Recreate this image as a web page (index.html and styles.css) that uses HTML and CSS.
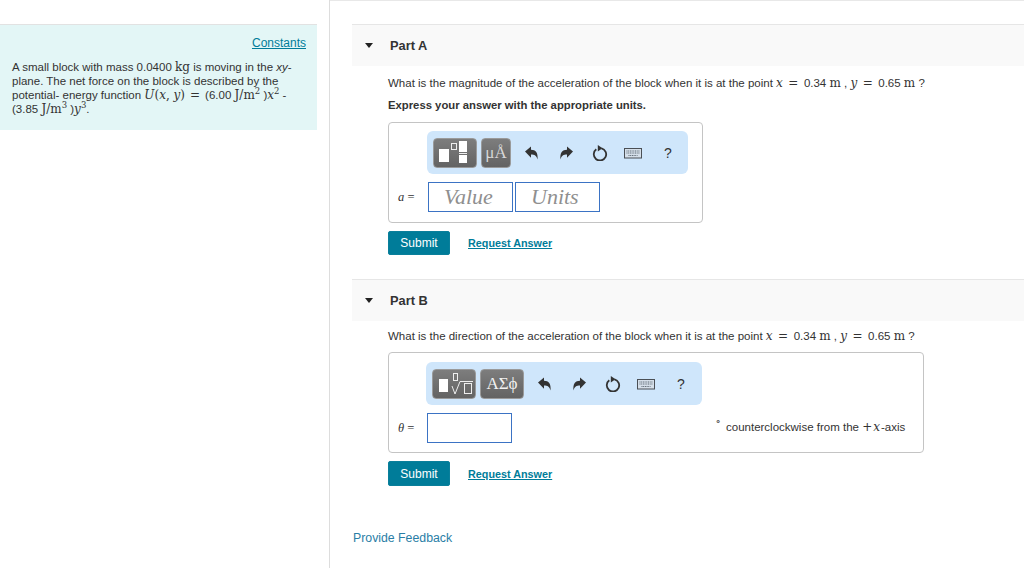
FILE: index.html
```html
<!DOCTYPE html>
<html lang="en">
<head>
<meta charset="utf-8">
<title>Part A and Part B</title>
<link rel="stylesheet" href="styles.css">
</head>
<body>
<div class="page">
  <aside class="left">
    <div class="intro">
      <div class="constants"><a href="#">Constants</a></div>
      <p class="intro-text">A small block with mass 0.0400 <span class="m">kg</span> is moving in the <i>xy</i>-<br>plane. The net force on the block is described by the<br>potential- energy function <span class="m"><i>U</i>(<i>x</i>, <i>y</i>)<span class="eq">=</span></span>(6.00 <span class="m">J/m<sup>2</sup></span> )<span class="m"><i>x</i><sup>2</sup></span> -<br>(3.85 <span class="m">J/m<sup>3</sup></span> )<span class="m"><i>y</i><sup>3</sup></span>.</p>
    </div>
  </aside>
  <main class="right">
    <section class="part">
      <header class="part-head"><span class="caret"></span><h2>Part A</h2></header>
      <div class="part-body">
        <p class="question">What is the magnitude of the acceleration of the block when it is at the point <span class="m"><i>x</i><span class="eq">=</span></span>0.34 <span class="m">m</span> , <span class="m"><i>y</i><span class="eq">=</span></span>0.65 <span class="m">m</span> ?</p>
        <p class="instruct">Express your answer with the appropriate units.</p>
        <div class="answer answer-a">
          <div class="toolbar toolbar-a">
            <button class="tool tool-wide" aria-label="Templates">
              <svg width="42" height="28" viewBox="0 0 42 28"><rect x="5" y="10" width="10" height="13" fill="#fff"/><rect x="17.500" y="4.500" width="5" height="6" fill="none" stroke="#eee"/><rect x="25" y="2" width="8" height="11" fill="#fff"/><rect x="25" y="14" width="8" height="1" fill="#eee"/><rect x="25" y="16" width="8" height="8" fill="#fff"/></svg>
            </button>
            <button class="tool tool-units">μÅ</button>
            <span class="icons">
              <svg class="ic" width="16" height="16" viewBox="0 0 16 16"><path d="M1 6.500 7 1.500v3.200c4.800 0 7 2.800 6.600 9.800-1.200-3.800-3-5-6.600-5v3.200z" fill="#333"/></svg>
              <svg class="ic" width="16" height="16" viewBox="0 0 16 16"><path d="M15 6.500 9 1.500v3.200c-4.800 0-7 2.800-6.600 9.800 1.200-3.800 3-5 6.600-5v3.200z" fill="#333"/></svg>
              <svg class="ic" width="16" height="16" viewBox="0 0 16 16"><path d="M9.500 3.300A6.200 6.200 0 1 1 4.300 4.300" fill="none" stroke="#333" stroke-width="1.800"/><path d="M5.800 0 10.500 3.200 5.800 6.500z" fill="#333"/></svg>
              <svg class="ic ic-kb" width="18" height="12" viewBox="0 0 18 12"><rect x=".500" y="1.500" width="17" height="9.500" fill="#d5dfe9" stroke="#4a4f55"/><path d="M2.500 4h13M2.500 6h13M4.500 8.500h9" stroke="#5b6670" stroke-width="1" stroke-dasharray="1 .7"/></svg>
              <span class="help">?</span>
            </span>
          </div>
          <div class="entry">
            <span class="label"><i>a</i> =</span>
            <span class="field field-ph">Value</span>
            <span class="field field-ph">Units</span>
          </div>
        </div>
        <div class="actions"><button class="submit">Submit</button><a class="req" href="#">Request Answer</a></div>
      </div>
    </section>
    <section class="part part-b">
      <header class="part-head"><span class="caret"></span><h2>Part B</h2></header>
      <div class="part-body">
        <p class="question">What is the direction of the acceleration of the block when it is at the point <span class="m"><i>x</i><span class="eq">=</span></span>0.34 <span class="m">m</span> , <span class="m"><i>y</i><span class="eq">=</span></span>0.65 <span class="m">m</span> ?</p>
        <div class="answer answer-b">
          <div class="toolbar toolbar-b">
            <button class="tool tool-wide" aria-label="Templates">
              <svg width="42" height="28" viewBox="0 0 42 28"><rect x="6" y="9" width="9" height="13" fill="#fff"/><rect x="20.500" y="3.500" width="4" height="7" fill="none" stroke="#eee"/><path d="M19 16l3 8L27 11.500h13" fill="none" stroke="#eee"/><rect x="31.500" y="13.500" width="7" height="10" fill="none" stroke="#eee"/></svg>
            </button>
            <button class="tool tool-greek">ΑΣϕ</button>
            <span class="icons">
              <svg class="ic" width="16" height="16" viewBox="0 0 16 16"><path d="M1 6.500 7 1.500v3.200c4.800 0 7 2.800 6.600 9.800-1.200-3.800-3-5-6.600-5v3.200z" fill="#333"/></svg>
              <svg class="ic" width="16" height="16" viewBox="0 0 16 16"><path d="M15 6.500 9 1.500v3.200c-4.800 0-7 2.800-6.600 9.800 1.200-3.800 3-5 6.600-5v3.200z" fill="#333"/></svg>
              <svg class="ic" width="16" height="16" viewBox="0 0 16 16"><path d="M9.500 3.300A6.200 6.200 0 1 1 4.300 4.300" fill="none" stroke="#333" stroke-width="1.800"/><path d="M5.800 0 10.500 3.200 5.800 6.500z" fill="#333"/></svg>
              <svg class="ic ic-kb" width="18" height="12" viewBox="0 0 18 12"><rect x=".500" y="1.500" width="17" height="9.500" fill="#d5dfe9" stroke="#4a4f55"/><path d="M2.500 4h13M2.500 6h13M4.500 8.500h9" stroke="#5b6670" stroke-width="1" stroke-dasharray="1 .7"/></svg>
              <span class="help">?</span>
            </span>
          </div>
          <div class="entry entry-b">
            <span class="label"><i>θ</i> =</span>
            <span class="field field-theta"></span>
            <span class="unit-note"><sup>∘</sup><span class="note">counterclockwise from the <span class="m">+<i>x</i></span>-axis</span></span>
          </div>
        </div>
        <div class="actions actions-b"><button class="submit">Submit</button><a class="req" href="#">Request Answer</a></div>
      </div>
    </section>
    <a class="feedback" href="#">Provide Feedback</a>
  </main>
</div>
</body>
</html>
```
FILE: styles.css
```css
* { box-sizing: border-box; }
html, body { margin: 0; height: 568px; overflow: hidden; background: #fff; }
body { font-family: "Liberation Sans", Arial, sans-serif; font-size: 11.500px; color: #333; }
p, h2 { margin: 0; }
a { color: #007c99; }
button { font-family: inherit; padding: 0; margin: 0; }

.page { display: flex; height: 568px; }
.left { width: 330px; flex: none; border-right: 1px solid #ddd; padding-top: 24px; }
.right { flex: 1; padding: 23px 0 0 22px; border-top: 1px solid #e8e8e8; min-width: 0; }

.intro { width: 317px; height: 106px; background: #e3f6f6; border-top: 1px solid #e2e2e2; padding: 11px 11px 0 12px; }
.constants { text-align: right; line-height: 14px; font-size: 12px; }
.intro-text { margin-top: 9.500px; line-height: 14.300px; color: #333; white-space: nowrap; }

.m { font-family: "DejaVu Serif", "Liberation Serif", serif; font-size: 12px; line-height: 1; color: #333; }
.eq { margin: 0 5px; }
.question .eq { margin: 0 5.500px; }
sup { font-size: 8.500px; line-height: 0; }

.part-head { height: 42px; background: #f9f9f9; border-top: 1px solid #e6e6e6; display: flex; align-items: center; padding-left: 13px; }
.caret { width: 0; height: 0; border-left: 4.500px solid transparent; border-right: 4.500px solid transparent; border-top: 5px solid #222; margin-right: 16px; }
.part-head h2 { font-size: 12.800px; font-weight: bold; color: #333; margin-left: 1px; }
.part-body { padding-left: 36px; }
.question { padding-top: 9px; line-height: 16px; white-space: nowrap; }
.part-b .question { padding-top: 7px; }
.instruct { margin-top: 7px; line-height: 14px; font-weight: bold; font-size: 11.300px; }

.answer { border: 1px solid #c4c4c4; border-radius: 4px; background: #fff; margin-top: 10px; padding-left: 39px; }
.answer-a { width: 315px; height: 101px; padding-top: 8px; }
.answer-b { width: 536px; height: 101px; padding-top: 9px; margin-top: 8px; }

.toolbar { height: 43px; background: #cfe6fb; border-radius: 6px; display: flex; align-items: center; padding-left: 6px; }
.toolbar-a { width: 261px; margin-left: -1px; }
.toolbar-b { width: 276px; margin-left: -2px; }
.tool { height: 30px; border: 1px solid #9a9a9a; border-radius: 4px; background: linear-gradient(#7d7d7d, #636363); color: #f2f2f2; font-family: "Liberation Serif", serif; display: flex; align-items: center; justify-content: center; }
.tool-wide { width: 44px; margin-right: 4px; overflow: hidden; }
.tool-units { width: 30px; font-size: 17px; color: #d8d8d8; }
.tool-greek { width: 44px; font-size: 17px; }
.icons { display: flex; align-items: center; margin-left: 13px; gap: 18px; }
.ic { display: block; flex: none; }
.ic-kb { margin-left: -2px; }
.help { font-size: 14px; color: #333; margin-left: 4px; }

.entry { display: flex; align-items: center; margin-top: 8px; height: 30px; margin-left: -30px; }
.label { width: 30px; font-family: "Liberation Serif", serif; font-size: 12.500px; color: #333; flex: none; }
.entry-b .label { width: 29px; }
.field { height: 30px; width: 85px; border: 1px solid #3b73c4; background: #fff; flex: none; }
.field + .field { margin-left: 2px; }
.field-ph { font-family: "Liberation Serif", serif; font-style: italic; font-size: 22px; color: #8f8f8f; padding-left: 15px; line-height: 28px; }
.unit-note { margin-left: 203px; display: flex; white-space: nowrap; }
.unit-note sup { font-size: 10px; line-height: 12px; margin-top: -6px; color: #555; }
.note { margin-left: 5px; padding-bottom: 2px; }
.note .m { letter-spacing: 1px; }

.actions { display: flex; align-items: center; margin-top: 8px; height: 24px; }
.actions-b { height: 25px; }
.submit { width: 62px; height: 100%; background: #007c99; color: #fff; border: 1px solid #0a7f9b; border-radius: 2px; font-size: 12px; }
.req { margin-left: 18px; font-weight: bold; font-size: 10.800px; }

.part-b { margin-top: 24px; }
.feedback { display: block; margin-top: 45px; font-size: 12.300px; margin-left: 1px; text-decoration: none; color: #2a7ea6; }
```
